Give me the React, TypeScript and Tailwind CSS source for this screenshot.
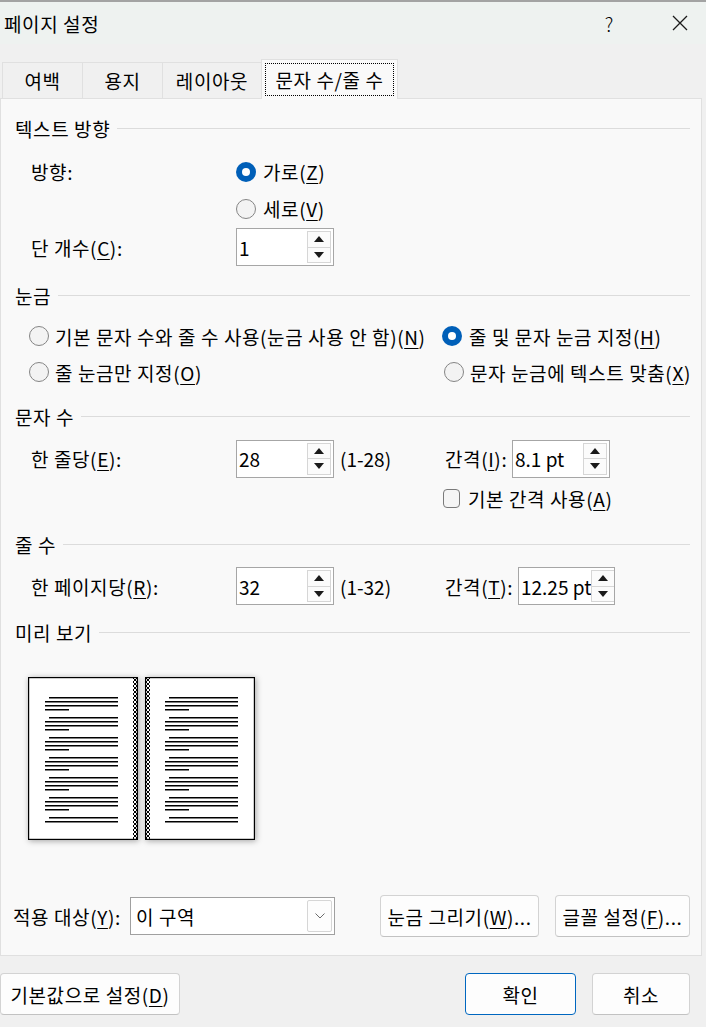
import React from "react";

// 밑줄 친 단축키 글자
function U({ c }: { c: string }) {
  return <span className="underline decoration-1 underline-offset-[3px]">{c}</span>;
}

function Radio({ checked }: { checked?: boolean }) {
  if (checked) {
    return (
      <span className="flex h-[20px] w-[20px] shrink-0 items-center justify-center rounded-full bg-[#005fb8]">
        <span className="h-[8px] w-[8px] rounded-full bg-white" />
      </span>
    );
  }
  return <span className="h-[20px] w-[20px] shrink-0 rounded-full border border-[#858585] bg-[#f3f3f3]" />;
}

function Arrow({ up }: { up?: boolean }) {
  return (
    <svg width="10" height="6" viewBox="0 0 10 6">
      <polygon points={up ? "0,6 5,0 10,6" : "0,0 10,0 5,6"} fill="#1a1a1a" />
    </svg>
  );
}

function Spin({ value, className }: { value: string; className: string }) {
  return (
    <div className={`flex h-[38px] overflow-hidden border border-[#a6a6a6] bg-white ${className}`}>
      <div className="flex flex-1 items-center whitespace-nowrap pl-[2px] tracking-normal">{value}</div>
      <div className="flex w-[26px] shrink-0 flex-col py-[2px] pr-[2px]">
        <div className="flex flex-1 items-center justify-center border border-[#d6d6d6] bg-[#fbfbfb]">
          <Arrow up />
        </div>
        <div className="flex flex-1 items-center justify-center border border-t-0 border-[#d6d6d6] bg-[#fbfbfb]">
          <Arrow />
        </div>
      </div>
    </div>
  );
}

function Header({ title, className }: { title: string; className: string }) {
  return (
    <div className={`flex h-[28px] items-center pl-[14px] pr-[11px] ${className}`}>
      <span>{title}</span>
      <div className="ml-[7px] h-px flex-1 bg-[#dcdcdc]" />
    </div>
  );
}

function Page({ side }: { side: "left" | "right" }) {
  const dx = side === "left" ? 0 : 3;
  const id = `chk-${side}`;
  const lines: { x1: number; x2: number; y: number }[] = [];
  for (let g = 0; g < 7; g++) {
    const y0 = 20 + g * 20;
    lines.push({ x1: 21 + dx, x2: 90 + dx, y: y0 });
    lines.push({ x1: 17 + dx, x2: 90 + dx, y: y0 + 4 });
    if (g < 6) {
      lines.push({ x1: 17 + dx, x2: 90 + dx, y: y0 + 8 });
      lines.push({ x1: 17 + dx, x2: 41 + dx, y: y0 + 12 });
    }
  }
  return (
    <div className="shadow-[1px_1px_6px_rgba(0,0,0,0.35)]">
      <svg width="110" height="163" viewBox="0 0 110 163" className="block">
        <defs>
          <pattern id={id} width="4" height="4" patternUnits="userSpaceOnUse">
            <rect width="4" height="4" fill="#fff" shapeRendering="crispEdges" />
            <rect width="2" height="2" fill="#000" shapeRendering="crispEdges" />
            <rect x="2" y="2" width="2" height="2" fill="#000" shapeRendering="crispEdges" />
          </pattern>
        </defs>
        <rect x="0" y="0" width="110" height="163" fill="#fff" />
        <rect
          x={side === "left" ? 105 : 1}
          y="1"
          width="4"
          height="161"
          fill={`url(#${id})`}
          shapeRendering="crispEdges"
        />
        <rect x="0.5" y="0.5" width="109" height="162" fill="none" stroke="#000" strokeWidth="1.4" />
        {lines.map((l, i) => (
          <rect key={i} x={l.x1} y={l.y} width={l.x2 - l.x1} height="1.5" fill="#000" />
        ))}
      </svg>
    </div>
  );
}

export default function App() {
  return (
    <div className="flex h-[1027px] w-[706px] flex-col overflow-hidden bg-[#f0f0f0] font-['Noto_Sans_CJK_KR','Noto_Sans',sans-serif] text-[19px] leading-none tracking-[0.6px] text-black">
      {/* 제목 표시줄 */}
      <div className="h-[2px] bg-[#a3a3a3]" />
      <div className="flex h-[42px] items-center bg-[#eef2f0] pl-[4px]">
        <span>페이지 설정</span>
        <span className="ml-auto mr-[58px] text-[19px] font-light">?</span>
        <svg width="16" height="16" viewBox="0 0 16 16" className="mr-[18px]">
          <path d="M1 1L15 15M15 1L1 15" stroke="#1a1a1a" strokeWidth="1.3" fill="none" />
        </svg>
      </div>

      {/* 탭 */}
      <div className="flex h-[54px] items-end pl-[2px]">
        <div className="flex h-[36px] w-[80px] items-center justify-center border-l border-t border-[#e0e0e0]">여백</div>
        <div className="flex h-[36px] w-[80px] items-center justify-center border-l border-t border-[#e0e0e0]">용지</div>
        <div className="flex h-[36px] w-[99px] items-center justify-center border-l border-t border-[#e0e0e0]">레이아웃</div>
        <div className="relative z-10 -mb-px flex h-[40px] w-[137px] border border-b-0 border-[#e0e0e0] bg-[#f9f9f9] p-[3px]">
          <div className="flex flex-1 items-center justify-center whitespace-nowrap border border-dotted border-black pb-[1px]">
            문자 수/줄 수
          </div>
        </div>
      </div>

      {/* 패널 */}
      <div className="flex h-[858px] w-[702px] flex-col border border-[#e0e0e0] bg-[#f9f9f9]">
        <Header title="텍스트 방향" className="mt-[15px]" />

        <div className="mt-[11px] flex h-[37px] items-center">
          <div className="w-[235px] pl-[30px]">방향:</div>
          <div className="flex items-center gap-[7px]">
            <Radio checked />
            <span>가로(<U c="Z" />)</span>
          </div>
        </div>
        <div className="flex h-[37px] items-center pl-[235px]">
          <div className="flex items-center gap-[7px]">
            <Radio />
            <span>세로(<U c="V" />)</span>
          </div>
        </div>
        <div className="flex h-[40px] items-center">
          <div className="w-[235px] pl-[30px]">단 개수(<U c="C" />):</div>
          <Spin value="1" className="w-[98px]" />
        </div>

        <Header title="눈금" className="mt-[14px]" />
        <div className="mt-[9px] grid grid-cols-[413px_1fr] pl-[28px]">
          <div className="flex h-[36px] items-center gap-[6px]">
            <Radio />
            <span className="whitespace-nowrap">기본 문자 수와 줄 수 사용(눈금 사용 안 함)(<U c="N" />)</span>
          </div>
          <div className="flex h-[36px] items-center gap-[7px]">
            <Radio checked />
            <span className="whitespace-nowrap">줄 및 문자 눈금 지정(<U c="H" />)</span>
          </div>
          <div className="flex h-[36px] items-center gap-[6px]">
            <Radio />
            <span>줄 눈금만 지정(<U c="O" />)</span>
          </div>
          <div className="flex h-[36px] items-center gap-[6px] pl-[2px]">
            <Radio />
            <span className="whitespace-nowrap">문자 눈금에 텍스트 맞춤(<U c="X" />)</span>
          </div>
        </div>

        <Header title="문자 수" className="mt-[12px]" />
        <div className="mt-[9px] flex h-[39px] items-center">
          <div className="w-[235px] pl-[30px]">한 줄당(<U c="E" />):</div>
          <Spin value="28" className="w-[98px]" />
          <div className="ml-[6px] w-[105px] tracking-normal">(1-28)</div>
          <div className="w-[67px]">간격(<U c="I" />):</div>
          <Spin value="8.1 pt" className="w-[98px]" />
        </div>
        <div className="mt-[2px] flex h-[36px] items-center gap-[8px] pl-[442px]">
          <span className="h-[19px] w-[17px] rounded-[4px] border border-[#7a7a7a] bg-[#f5f5f5]" />
          <span>기본 간격 사용(<U c="A" />)</span>
        </div>

        <Header title="줄 수" className="mt-[14px]" />
        <div className="mt-[8px] flex h-[40px] items-center">
          <div className="w-[235px] pl-[30px]">한 페이지당(<U c="R" />):</div>
          <Spin value="32" className="w-[98px]" />
          <div className="ml-[6px] w-[105px] tracking-normal">(1-32)</div>
          <div className="w-[73px]">간격(<U c="T" />):</div>
          <Spin value="12.25 pt" className="w-[97px]" />
        </div>

        <Header title="미리 보기" className="mt-[12px]" />
        <div className="mt-[31px] flex gap-[7px] pl-[27px]">
          <Page side="left" />
          <Page side="right" />
        </div>

        <div className="mb-[18px] mt-auto flex h-[42px] items-center pl-[12px]">
          <div className="w-[117px] whitespace-nowrap">적용 대상(<U c="Y" />):</div>
          <div className="flex h-[38px] w-[205px] items-center border border-[#a0a0a0] bg-white p-[2px]">
            <span className="flex-1 pl-[3px]">이 구역</span>
            <div className="flex h-full w-[25px] items-center justify-center rounded-[2px] border border-[#d6d6d6] bg-[#fdfdfd]">
              <svg width="10" height="6" viewBox="0 0 10 6">
                <path d="M0.5 0.5L5 5L9.5 0.5" stroke="#6b6b6b" strokeWidth="1" fill="none" />
              </svg>
            </div>
          </div>
          <button className="ml-[45px] flex h-[42px] w-[159px] items-center justify-center whitespace-nowrap rounded-[4px] border border-[#d3d3d3] border-b-[#c2c2c2] bg-[#fdfdfd]">
            눈금 그리기(<U c="W" />)...
          </button>
          <button className="ml-[16px] flex h-[42px] w-[135px] items-center justify-center whitespace-nowrap rounded-[4px] border border-[#d3d3d3] border-b-[#c2c2c2] bg-[#fdfdfd]">
            글꼴 설정(<U c="F" />)...
          </button>
        </div>
      </div>

      {/* 하단 버튼 */}
      <div className="mt-[17px] flex h-[42px] pr-[16px]">
        <button className="flex h-[42px] w-[180px] items-center justify-center whitespace-nowrap rounded-[4px] border border-[#d3d3d3] border-b-[#c2c2c2] bg-[#fdfdfd]">
          기본값으로 설정(<U c="D" />)
        </button>
        <button className="ml-auto flex h-[42px] w-[111px] items-center justify-center rounded-[4px] border border-[#0067c0] bg-[#fdfdfd]">
          확인
        </button>
        <button className="ml-[16px] flex h-[42px] w-[98px] items-center justify-center rounded-[4px] border border-[#d3d3d3] border-b-[#c2c2c2] bg-[#fdfdfd]">
          취소
        </button>
      </div>
    </div>
  );
}
